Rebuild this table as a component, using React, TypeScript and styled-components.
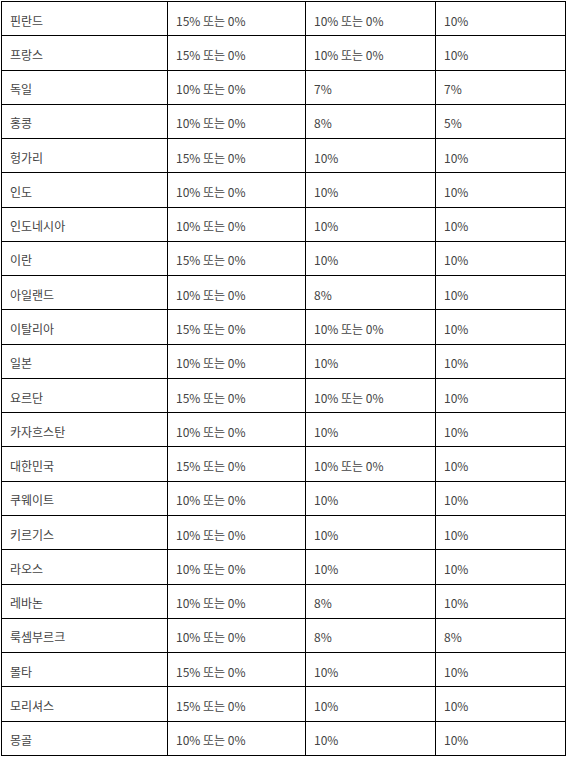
import React from "react";
import styled, { createGlobalStyle } from "styled-components";

const GlobalStyle = createGlobalStyle`
  body {
    margin: 0;
    background: #fff;
    font-family: "Noto Sans CJK KR", "Noto Sans", sans-serif;
  }
`;

const rows: [string, string, string, string][] = [
  ["핀란드", "15% 또는 0%", "10% 또는 0%", "10%"],
  ["프랑스", "15% 또는 0%", "10% 또는 0%", "10%"],
  ["독일", "10% 또는 0%", "7%", "7%"],
  ["홍콩", "10% 또는 0%", "8%", "5%"],
  ["헝가리", "15% 또는 0%", "10%", "10%"],
  ["인도", "10% 또는 0%", "10%", "10%"],
  ["인도네시아", "10% 또는 0%", "10%", "10%"],
  ["이란", "15% 또는 0%", "10%", "10%"],
  ["아일랜드", "10% 또는 0%", "8%", "10%"],
  ["이탈리아", "15% 또는 0%", "10% 또는 0%", "10%"],
  ["일본", "10% 또는 0%", "10%", "10%"],
  ["요르단", "15% 또는 0%", "10% 또는 0%", "10%"],
  ["카자흐스탄", "10% 또는 0%", "10%", "10%"],
  ["대한민국", "15% 또는 0%", "10% 또는 0%", "10%"],
  ["쿠웨이트", "10% 또는 0%", "10%", "10%"],
  ["키르기스", "10% 또는 0%", "10%", "10%"],
  ["라오스", "10% 또는 0%", "10%", "10%"],
  ["레바논", "10% 또는 0%", "8%", "10%"],
  ["룩셈부르크", "10% 또는 0%", "8%", "8%"],
  ["몰타", "15% 또는 0%", "10%", "10%"],
  ["모리셔스", "15% 또는 0%", "10%", "10%"],
  ["몽골", "10% 또는 0%", "10%", "10%"],
];

const widths = [166, 138, 130, 130];

function App() {
  return (
    <>
      <GlobalStyle />
      <Wrapper>
        <RateTable>
          <colgroup>
            {widths.map((w, i) => (
              <col key={i} style={{ width: w }} />
            ))}
          </colgroup>
          <tbody>
            {rows.map((r) => (
              <Row key={r[0]}>
                {r.map((cell, i) => (
                  <Cell key={i}>{cell}</Cell>
                ))}
              </Row>
            ))}
          </tbody>
        </RateTable>
      </Wrapper>
    </>
  );
}

const Wrapper = styled.div`
  padding: 1px 0 0 1px;
`;

const RateTable = styled.table`
  border-collapse: collapse;
  table-layout: fixed;
  width: 564px;
  height: 755px;
`;

const Row = styled.tr``;

const Cell = styled.td`
  border: 1px solid #000;
  padding: 3px 8px 0;
  font-size: 12px;
  color: #444;
  vertical-align: middle;
  white-space: nowrap;
`;

export default App;
